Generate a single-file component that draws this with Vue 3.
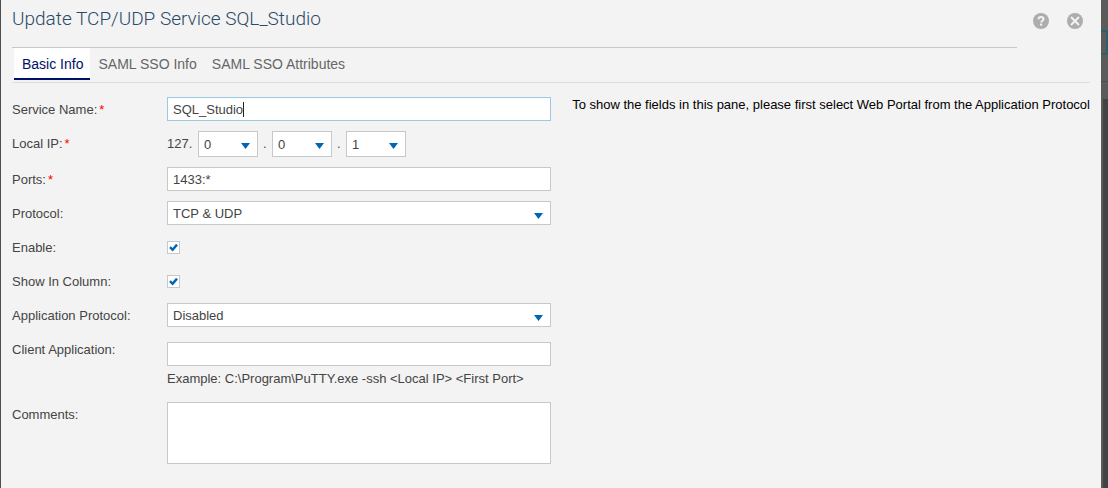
<script setup>
import { ref } from 'vue'

const tabs = ['Basic Info', 'SAML SSO Info', 'SAML SSO Attributes']
const activeTab = ref('Basic Info')
const octets = ref(['0', '0', '1'])
const form = ref({
  name: 'SQL_Studio',
  ports: '1433:*',
  protocol: 'TCP & UDP',
  enable: true,
  show: true,
  appProtocol: 'Disabled',
  client: '',
  comments: ''
})
</script>

<template>
  <div class="backdrop">
    <main class="dialog">
      <header class="head">
        <h1>Update TCP/UDP Service SQL_Studio</h1>
        <div class="actions">
          <button type="button" aria-label="Help">
            <svg viewBox="0 0 16 16" width="16" height="16">
              <circle cx="8" cy="8" r="8" fill="#adadad" />
              <path d="M5.500 6.300C5.500 4.700 6.500 3.900 8 3.900s2.500.8 2.500 2.100c0 1.700-2.300 1.700-2.300 3.600" fill="none" stroke="#f3f3f3" stroke-width="2" />
              <rect x="7" y="10.600" width="2.200" height="2" fill="#f3f3f3" />
            </svg>
          </button>
          <button type="button" aria-label="Close">
            <svg viewBox="0 0 16 16" width="16" height="16">
              <circle cx="8" cy="8" r="8" fill="#adadad" />
              <path d="M4 4l8 8M12 4l-8 8" stroke="#f3f3f3" stroke-width="2" />
            </svg>
          </button>
        </div>
      </header>

      <nav class="tabs" role="tablist">
        <button
          v-for="t in tabs"
          :key="t"
          type="button"
          role="tab"
          :aria-selected="t === activeTab"
          :class="{ active: t === activeTab }"
          @click="activeTab = t"
        >{{ t }}</button>
      </nav>

      <div class="content">
        <form class="form" @submit.prevent>
          <div class="row">
            <label for="name">Service Name:<i>*</i></label>
            <div class="field caret-field">
              <input id="name" v-model="form.name" class="box current" type="text" />
              <span class="caret"></span>
            </div>
          </div>
          <div class="row">
            <label for="octet0">Local IP:<i>*</i></label>
            <div class="field ip">
              <span class="first">127.</span>
              <template v-for="(o, i) in octets" :key="i">
                <span v-if="i" class="dot">.</span>
                <span class="select small">
                  <select :id="'octet' + i" v-model="octets[i]" class="box" :aria-label="'Octet ' + (i + 2)">
                    <option>0</option>
                    <option>1</option>
                  </select>
                  <svg viewBox="0 0 9 6" width="9" height="6"><path d="M0 0h9L4.500 6z" fill="#0066b3" /></svg>
                </span>
              </template>
            </div>
          </div>
          <div class="row">
            <label for="ports">Ports:<i>*</i></label>
            <div class="field"><input id="ports" v-model="form.ports" class="box" type="text" /></div>
          </div>
          <div class="row">
            <label for="protocol">Protocol:</label>
            <div class="field select">
              <select id="protocol" v-model="form.protocol" class="box">
                <option>TCP &amp; UDP</option>
              </select>
              <svg viewBox="0 0 9 6" width="9" height="6"><path d="M0 0h9L4.500 6z" fill="#0066b3" /></svg>
            </div>
          </div>
          <div class="row">
            <label for="enable">Enable:</label>
            <div class="field check">
              <input id="enable" v-model="form.enable" type="checkbox" />
              <svg viewBox="0 0 13 13" width="13" height="13"><path d="M3 6.200l2.600 2.600L10 3.600" /></svg>
            </div>
          </div>
          <div class="row">
            <label for="show">Show In Column:</label>
            <div class="field check">
              <input id="show" v-model="form.show" type="checkbox" />
              <svg viewBox="0 0 13 13" width="13" height="13"><path d="M3 6.200l2.600 2.600L10 3.600" /></svg>
            </div>
          </div>
          <div class="row">
            <label for="app">Application Protocol:</label>
            <div class="field select">
              <select id="app" v-model="form.appProtocol" class="box">
                <option>Disabled</option>
              </select>
              <svg viewBox="0 0 9 6" width="9" height="6"><path d="M0 0h9L4.500 6z" fill="#0066b3" /></svg>
            </div>
          </div>
          <div class="row client">
            <label for="client">Client Application:</label>
            <div class="field">
              <input id="client" v-model="form.client" class="box" type="text" />
              <p>Example: C:\Program\PuTTY.exe -ssh &lt;Local IP&gt; &lt;First Port&gt;</p>
            </div>
          </div>
          <div class="row">
            <label for="comments">Comments:</label>
            <div class="field"><textarea id="comments" v-model="form.comments" class="box"></textarea></div>
          </div>
        </form>
        <p class="note">To show the fields in this pane, please first select Web Portal from the Application Protocol</p>
      </div>
    </main>
    <aside class="behind">
      <div class="top"><span class="search"></span></div>
      <div class="scroll"></div>
    </aside>
  </div>
</template>

<style>
body {
  margin: 0;
}
</style>

<style scoped>
* {
  box-sizing: border-box;
}
.backdrop {
  display: flex;
  min-height: 100vh;
  padding-left: 1px;
  background: #4d4d4f;
  font: 13px/16px "Liberation Sans", Arial, sans-serif;
  color: #444;
}
.dialog {
  flex: 1;
  min-width: 0;
  padding: 0 11px 24px;
  background: #f3f3f3;
}
.behind {
  display: flex;
  flex-direction: column;
  flex: 0 0 7px;
  overflow: hidden;
  background: #5b5b5b;
}
.top {
  height: 82px;
  padding-top: 30px;
  border-bottom: 1px solid #4e4e4e;
}
.search {
  display: block;
  height: 25px;
  border: 2px solid #2b5f6e;
  border-left: 0;
}
.scroll {
  flex: 1;
  margin: 17px 0 0 2px;
  background: #434343;
}
.head {
  display: flex;
  justify-content: space-between;
  height: 47px;
}
h1 {
  margin: 6px 0 0;
  font: 300 19px/26px Roboto, "Open Sans", sans-serif;
  color: #2b4a66;
}
.actions {
  display: flex;
  gap: 18px;
  padding: 13px 7px 0 0;
}
.actions button {
  width: 16px;
  height: 16px;
  padding: 0;
  border: 0;
  background: none;
}
.actions svg {
  display: block;
}
.tabs {
  display: flex;
  height: 36px;
  padding: 1px 0 2px 2px;
  border-bottom: 1px solid #d5e1e6;
  position: relative;
}
.tabs::before {
  content: "";
  position: absolute;
  top: 0;
  left: 0;
  right: 73px;
  height: 1px;
  background: #c8c8c8;
}
.tabs button {
  height: 32px;
  padding: 1px 7px 0 8px;
  border: 0;
  border-bottom: 2px solid transparent;
  background: none;
  font: 14px/16px "Liberation Sans", Arial, sans-serif;
  color: #666;
}
.tabs .active {
  border-color: #001166;
  background: #fff;
  color: #001166;
}
.content {
  display: flex;
  gap: 21px;
  padding-top: 14px;
}
.form {
  flex: 1;
  display: flex;
  flex-direction: column;
  gap: 10px;
}
.row {
  display: flex;
}
label {
  flex: 0 0 155px;
  padding-top: 5px;
}
label i {
  margin-left: 2px;
  font-style: normal;
  color: #f00;
}
.field {
  flex: 1;
  min-width: 0;
}
.box {
  display: block;
  width: 100%;
  height: 24px;
  margin: 0;
  padding: 0 5px;
  border: 1px solid #c8c8c8;
  border-radius: 0;
  background: #fff;
  font: 13px/16px "Liberation Sans", Arial, sans-serif;
  color: #444;
  outline: 0;
  appearance: none;
}
select.box {
  padding-top: 1px;
}
.current {
  border-color: #9bc8e2;
}
.caret-field,
.select,
.check {
  position: relative;
}
.caret {
  position: absolute;
  top: 5px;
  left: 76px;
  width: 1px;
  height: 15px;
  background: #222;
}
.ip {
  display: flex;
}
.first {
  width: 31px;
  padding-top: 5px;
}
.dot {
  width: 14px;
  padding: 5px 0 0 5px;
}
.small {
  width: 60px;
}
.small .box {
  height: 26px;
}
.select svg {
  position: absolute;
  top: 12px;
  right: 8px;
  pointer-events: none;
}
.check {
  min-height: 24px;
  padding-top: 6px;
}
.check input {
  display: block;
  width: 13px;
  height: 13px;
  margin: 0;
  border: 1px solid #c8c8c8;
  background: #fff;
  appearance: none;
}
.check svg {
  display: none;
  position: absolute;
  top: 6px;
  left: 0;
  fill: none;
  stroke: #0066b3;
  stroke-width: 2.4;
  pointer-events: none;
}
.check input:checked + svg {
  display: block;
}
.client .box {
  margin-top: 5px;
}
.client p {
  margin: 5px 0;
}
textarea.box {
  height: 62px;
  resize: none;
}
.note {
  margin: 0;
  color: #000;
}
</style>
